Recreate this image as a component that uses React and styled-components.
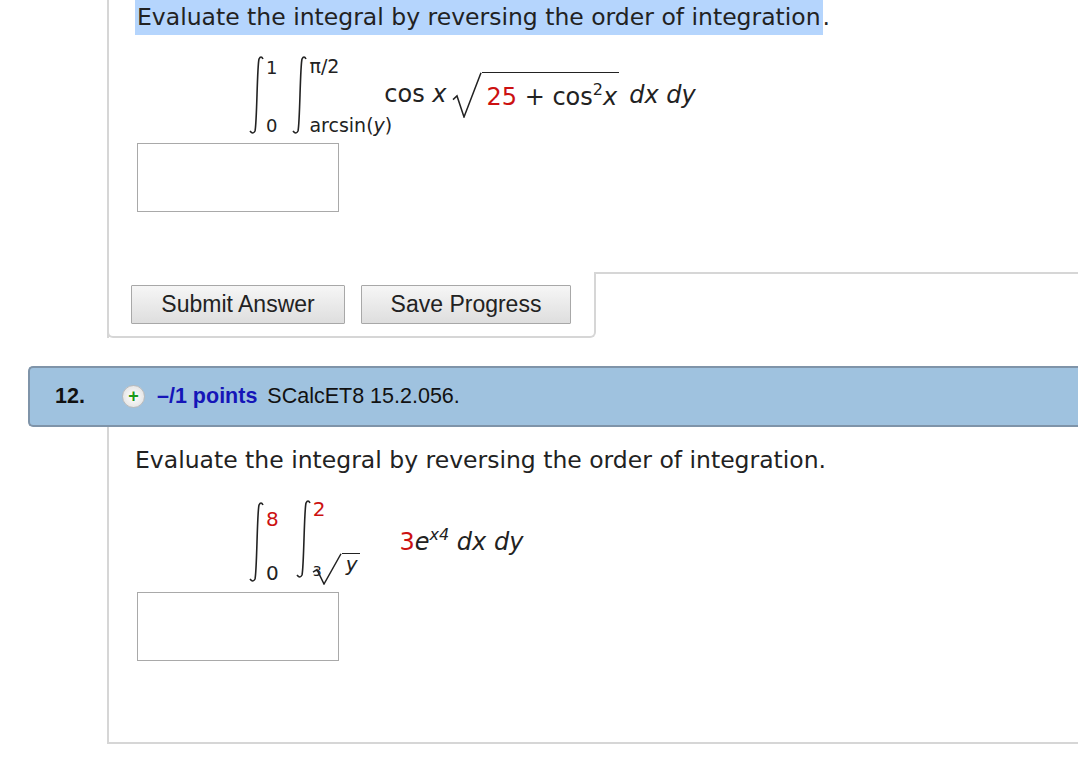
import React from "react";
import styled, { createGlobalStyle } from "styled-components";

const Global = createGlobalStyle`
  html, body { margin: 0; padding: 0; background: #fff; overflow: hidden; }
  body { width: 1078px; height: 766px; }
`;
const Page = styled.div`width: 1078px; height: 766px;`;
const Card1 = styled.div`margin-left: 107px; border-left: 2px solid #d6d6d6;`;
const Question = styled.div`
  font-family: "DejaVu Sans", Verdana, sans-serif; font-size: 23.5px; color: #222;
  padding-left: 26px; height: 35px; line-height: 35px; white-space: nowrap;
`;
const Hl = styled.span`background: #b5d5fd; padding: 0 2px; display: inline-block;`;
const MathRow = styled.div`
  display: flex; align-items: center; height: ${p => p.$h}px; margin-top: ${p => p.$mt}px;
  padding-left: ${p => p.$pl}px; font-family: "DejaVu Sans", Verdana, sans-serif; color: #222; font-size: 24px;
`;
const IntWrap = styled.div`display: flex; height: ${p => p.$h}px; margin-right: ${p => p.$mr}px;`;
const Limits = styled.div`
  display: flex; flex-direction: column; justify-content: space-between; margin-left: 2px;
  font-size: ${p => p.$s}px; line-height: 1;
`;
const Lim = styled.span`color: ${p => p.$red ? "#cc1111" : "#222"}; margin-top: ${p => p.$mt || 0}px; white-space: nowrap;`;
const Term = styled.span`white-space: nowrap; margin-right: ${p => p.$mr || 0}px;`;
const Red = styled.span`color: #cc1111;`;
const I = styled.i``;
const Sup = styled.sup`font-size: 16px; vertical-align: 10px; line-height: 0;`;
const SqrtWrap = styled.span`display: inline-flex; align-items: stretch; margin-right: 10px;`;
const Radicand = styled.span`border-top: 1.5px solid #222; padding: ${p => p.$pt}px 2px 0 4px; white-space: nowrap;`;
const Index = styled.span`font-size: 14px; align-self: center; margin-right: -10px; margin-top: 4px;`;
const Box = styled.div`
  width: 200px; height: 67px; border: 1.5px solid #a9a9a9; margin-left: 28px; background: #fff;
`;
const BottomRow = styled.div`display: flex; margin-top: 60px;`;
const BtnArea = styled.div`
  width: 489px; height: 66px; display: flex; gap: 16px; padding-left: 22px; padding-top: 13px;
  box-sizing: border-box; border: 2px solid #d6d6d6; border-top: none;
  border-radius: 0 0 6px 6px; margin-left: -2px;
`;
const Filler = styled.div`flex: 1; border-top: 2px solid #d6d6d6; height: 0;`;
const Button = styled.button`
  height: 39px; width: ${p => p.$w}px; font-family: "Liberation Sans", Arial, sans-serif; font-size: 23px;
  color: #222; background: linear-gradient(#f6f6f6, #dedede); border: 1px solid #a8a8a8; border-radius: 1px;
`;
const Header = styled.div`
  margin: 28px 0 0 28px; height: 57px; background: #9fc2df; border: 2px solid #7f94a9; border-right: none;
  border-radius: 5px 0 0 5px; display: flex; align-items: center;
  font-family: "Liberation Sans", Arial, sans-serif; font-size: 21.5px; color: #111;
`;
const Num = styled.b`width: 92px; padding-left: 25px; box-sizing: border-box;`;
const Plus = styled.span`
  width: 21px; height: 21px; border-radius: 50%; background: radial-gradient(#fff, #ddd); border: 1px solid #bbb;
  display: inline-flex; align-items: center; justify-content: center; color: #1a9a1a; font-weight: bold; font-size: 18px; margin-right: 12px;
`;
const Points = styled.b`color: #1515b8; margin-right: 10px;`;
const Card2 = styled.div`margin-left: 107px; border-left: 2px solid #d6d6d6; border-bottom: 2px solid #d6d6d6; height: 317px; padding-top: 16px; box-sizing: border-box;`;

const Int = ({ h }) => (
  <svg width="16" height={h} viewBox={`0 0 16 ${h}`}>
    <path d={`M15 4 Q13 0 11 4 Q10 8 9 ${h / 2} Q8 ${h - 8} 7 ${h - 4} Q5 ${h} 2 ${h - 4}`} fill="none" stroke="#222" strokeWidth="1.6" />
  </svg>
);
const Radical = ({ h }) => (
  <svg width="30" height={h} viewBox={`0 0 30 ${h}`}>
    <path d={`M1 ${h * 0.6} L5 ${h * 0.52} L12 ${h - 1} L29 0.75`} fill="none" stroke="#222" strokeWidth="1.5" />
  </svg>
);

export default function App() {
  return (
    <Page>
      <Global />
      <Card1>
        <Question><Hl>Evaluate the integral by reversing the order of integration</Hl>.</Question>
        <MathRow $h={96} $mt={12} $pl={139}>
          <IntWrap $h={80} $mr={14}>
            <Int h={80} />
            <Limits $s={18}><Lim $mt={4}>1</Lim><Lim>0</Lim></Limits>
          </IntWrap>
          <IntWrap $h={80} $mr={0}>
            <Int h={80} />
            <Limits $s={19}><Lim $mt={2}>π/2</Lim><Lim>arcsin(<I>y</I>)</Lim></Limits>
          </IntWrap>
          <Term $mr={6} style={{ marginLeft: -8, marginTop: -2 }}>cos <I>x</I></Term>
          <SqrtWrap>
            <Radical h={46} />
            <Radicand $pt={10}><Red>25</Red> + cos<Sup>2</Sup><I>x</I></Radicand>
          </SqrtWrap>
          <Term><I>dx dy</I></Term>
        </MathRow>
        <Box />
        <BottomRow>
          <BtnArea>
            <Button $w={214}>Submit Answer</Button>
            <Button $w={210}>Save Progress</Button>
          </BtnArea>
          <Filler />
        </BottomRow>
      </Card1>
      <Header>
        <Num>12.</Num>
        <Plus>+</Plus>
        <Points>–/1 points</Points>
        <span>SCalcET8 15.2.056.</span>
      </Header>
      <Card2>
        <Question>Evaluate the integral by reversing the order of integration.</Question>
        <MathRow $h={100} $mt={14} $pl={139}>
          <IntWrap $h={82} $mr={16}>
            <Int h={82} />
            <Limits $s={20}><Lim $red $mt={8}>8</Lim><Lim>0</Lim></Limits>
          </IntWrap>
          <IntWrap $h={86} $mr={40}>
            <Int h={80} />
            <Limits $s={20}>
              <Lim $red>2</Lim>
              <SqrtWrap style={{ marginRight: 0 }}>
                <Index>3</Index>
                <Radical h={32} />
                <Radicand $pt={0}><I>y</I></Radicand>
              </SqrtWrap>
            </Limits>
          </IntWrap>
          <Term><Red>3</Red><I>e<Sup>x4</Sup></I> <I>dx dy</I></Term>
        </MathRow>
        <Box />
      </Card2>
    </Page>
  );
}
